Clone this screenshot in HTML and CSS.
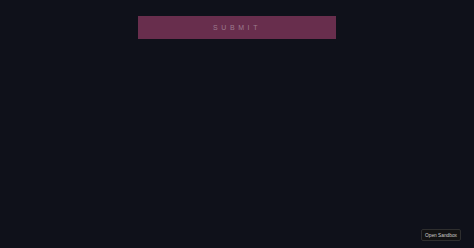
FILE: index.html
```html
<!DOCTYPE html>
<html>
<head>
<meta charset="utf-8">
<link rel="stylesheet" href="styles.css">
</head>
<body>
<main class="page">
  <button class="submit">SUBMIT</button>
</main>
<a class="sandbox">Open Sandbox</a>
</body>
</html>
```
FILE: styles.css
```css
html, body {
  margin: 0;
  padding: 0;
  width: 100%;
  height: 100%;
  background: #0f111a;
  font-family: "Liberation Sans", Arial, sans-serif;
}
.page {
  display: flex;
  justify-content: center;
  padding-top: 16px;
}
.submit {
  width: 198px;
  height: 23px;
  background: #682e4d;
  border: none;
  color: #9c7b8e;
  font-family: "Liberation Sans", Arial, sans-serif;
  font-size: 7px;
  letter-spacing: 3.6px;
  padding: 0;
  margin: 0;
}
.sandbox {
  position: absolute;
  right: 13px;
  bottom: 7px;
  height: 12px;
  box-sizing: border-box;
  padding: 0 3px;
  display: flex;
  align-items: center;
  font-size: 4.8px;
  color: #d0d0d0;
  background: #121212;
  border: 1px solid #2e2e2e;
  border-radius: 2px;
}
```
